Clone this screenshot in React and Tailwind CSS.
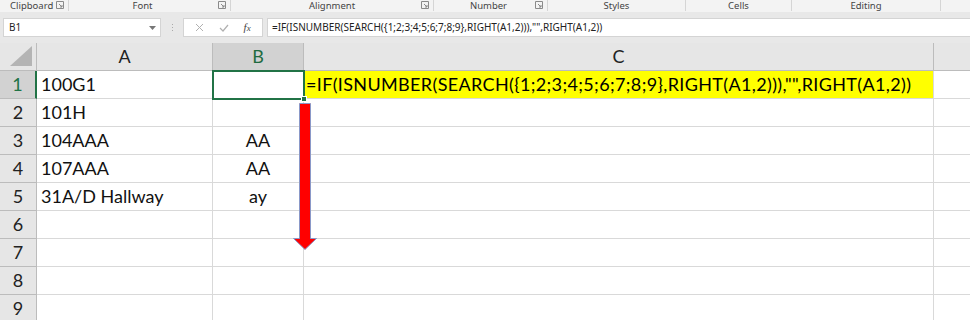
import React from "react";

const cellFont = { fontFamily: "Lato, 'Open Sans', sans-serif" };
const uiFont = { fontFamily: "'Noto Sans', 'Open Sans', sans-serif" };

const FORMULA = '=IF(ISNUMBER(SEARCH({1;2;3;4;5;6;7;8;9},RIGHT(A1,2))),"",RIGHT(A1,2))';

const rows = [
  { a: "100G1", b: "" },
  { a: "101H", b: "" },
  { a: "104AAA", b: "AA" },
  { a: "107AAA", b: "AA" },
  { a: "31A/D Hallway", b: "ay" },
  { a: "", b: "" },
  { a: "", b: "" },
  { a: "", b: "" },
  { a: "", b: "" },
];

const groups = [
  { name: "Clipboard", w: "w-[69px]", launcher: true, pad: "pl-[10px]", align: "justify-start" },
  { name: "Font", w: "w-[162px]", launcher: true, pad: "pr-[14px]", align: "justify-center" },
  { name: "Alignment", w: "w-[203px]", launcher: true, align: "justify-center" },
  { name: "Number", w: "w-[114px]", launcher: true, pad: "pr-[4px]", align: "justify-center" },
  { name: "Styles", w: "w-[138px]", launcher: false, align: "justify-center" },
  { name: "Cells", w: "w-[106px]", launcher: false, align: "justify-center" },
  { name: "Editing", w: "w-[149px]", launcher: false, align: "justify-center" },
];

function Launcher() {
  return (
    <svg width="8" height="8" viewBox="0 0 8 8" className="shrink-0">
      <path d="M0.5 0.5h7v7h-7z" fill="none" stroke="#8a8a8a" strokeWidth="1" />
      <path d="M3 3l3 3M6 4v2h-2" fill="none" stroke="#8a8a8a" strokeWidth="1" />
    </svg>
  );
}

function Ribbon() {
  return (
    <div className="flex h-[12px] bg-[#f3f3f3] text-[9.5px] leading-[11px] text-[#444]" style={uiFont}>
      {groups.map((g) => (
        <div key={g.name} className={`relative flex ${g.w} h-[11px] border-r border-[#d5d5d5]`}>
          <div className={`flex-1 flex ${g.align} ${g.pad || ""}`}>
            <span>{g.name}</span>
          </div>
          {g.launcher && (
            <div className="absolute right-[4px] top-[1px]">
              <Launcher />
            </div>
          )}
        </div>
      ))}
    </div>
  );
}

function FormulaBar() {
  return (
    <div className="flex items-stretch h-[25px] bg-[#e8e8e8] pt-[6px]" style={uiFont}>
      <div className="ml-[3px] w-[158px] h-[19px] bg-white border border-[#d4d4d4] flex items-center justify-between pl-[5px] pr-[4px] text-[10px] text-[#222]">
        <span>B1</span>
        <svg width="7" height="4" viewBox="0 0 7 4">
          <path d="M0 0h7L3.5 4z" fill="#777" />
        </svg>
      </div>
      <div className="w-[22px] h-[19px] flex flex-col items-center justify-center gap-[2px]">
        <span className="w-[1px] h-[1px] bg-[#aaa]" />
        <span className="w-[1px] h-[1px] bg-[#aaa]" />
        <span className="w-[1px] h-[1px] bg-[#aaa]" />
      </div>
      <div className="w-[80px] h-[19px] bg-white border border-[#d4d4d4] flex items-center justify-around px-[4px]">
        <svg width="9" height="9" viewBox="0 0 9 9">
          <path d="M1 1l7 7M8 1l-7 7" stroke="#b0b0b0" strokeWidth="1" />
        </svg>
        <svg width="10" height="8" viewBox="0 0 10 8">
          <path d="M1 4l3 3 5-6" fill="none" stroke="#b0b0b0" strokeWidth="1.2" />
        </svg>
        <span className="text-[11px] italic text-[#444]" style={{ fontFamily: "'Liberation Serif', serif" }}>
          f<span className="text-[9px]">x</span>
        </span>
      </div>
      <div className="ml-[4px] flex-1 h-[19px] bg-white border border-[#d4d4d4] border-r-0 flex items-center pl-[4px] text-[10px] text-[#222] whitespace-nowrap">
        {FORMULA}
      </div>
    </div>
  );
}

const cols = "grid-cols-[37px_176px_91px_630px_1fr]";

function Sheet() {
  return (
    <div className="relative bg-white" style={cellFont}>
      <div className="h-[6px] bg-[#e8e8e8]" />
      <div className={`grid ${cols} h-[28px] text-[18px] text-[#222]`}>
        <div className="relative bg-[#e6e6e6] border-r border-b border-[#bcbcbc]">
          <svg className="absolute right-[4px] bottom-[4px]" width="22" height="20" viewBox="0 0 22 20">
            <path d="M22 0V20H0z" fill="#b4b4b4" />
          </svg>
        </div>
        <div className="bg-[#e6e6e6] border-r border-b border-[#bcbcbc] flex items-center justify-center">A</div>
        <div className="bg-[#d2d2d2] border-r border-b border-[#bcbcbc] flex items-center justify-center text-[#1f6b40]">B</div>
        <div className="bg-[#e6e6e6] border-r border-b border-[#bcbcbc] flex items-center justify-center">C</div>
        <div className="bg-[#e6e6e6] border-b border-[#bcbcbc]" />
      </div>
      {rows.map((r, i) => (
        <div key={i} className={`grid ${cols} h-[28px] text-[18px] text-[#111]`}>
          <div
            className={`flex items-center justify-center border-b border-b-[#bcbcbc] ${
              i === 0
                ? "bg-[#d2d2d2] text-[#217346] border-r-2 border-r-[#217346]"
                : "bg-[#e6e6e6] text-[#222] border-r border-r-[#bcbcbc]"
            }`}
          >
            {i + 1}
          </div>
          <div className="flex items-center pl-[4px] border-r border-b border-[#d9d9d9] whitespace-nowrap">{r.a}</div>
          <div className="flex items-center justify-center border-r border-b border-[#d9d9d9]">{r.b}</div>
          <div
            className={`flex items-center pl-[2px] border-r border-b border-[#d9d9d9] whitespace-nowrap overflow-hidden ${
              i === 0 ? "bg-[#ffff00] text-black tracking-[0.35px]" : ""
            }`}
          >
            {i === 0 ? FORMULA : ""}
          </div>
          <div className="border-b border-[#d9d9d9]" />
        </div>
      ))}
      {/* active cell B1 */}
      <div className="absolute left-[212px] top-[33px] w-[93px] h-[30px] border-2 border-[#217346]">
        <span className="absolute -right-[4px] -bottom-[4px] w-[6px] h-[6px] bg-[#217346] border border-white" />
      </div>
      <svg className="absolute left-[292px] top-[66px]" width="26" height="150" viewBox="0 0 26 150">
        <path
          d="M7.5 0.5H18.5V135.5H24.5L13 146.5L1.5 135.5H7.5Z"
          fill="#ff0000"
          stroke="#8a98c8"
          strokeWidth="1"
        />
      </svg>
    </div>
  );
}

export default function App() {
  return (
    <div className="w-[970px] h-[320px] overflow-hidden bg-white">
      <Ribbon />
      <FormulaBar />
      <Sheet />
    </div>
  );
}
